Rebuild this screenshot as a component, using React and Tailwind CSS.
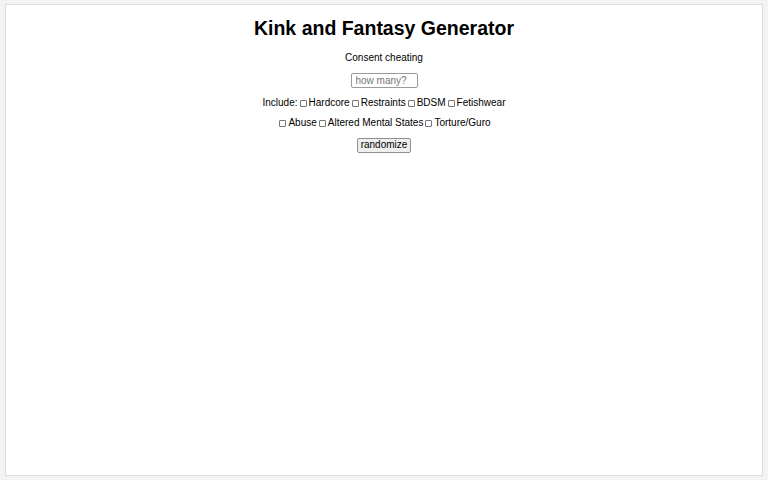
const kinds = ["Hardcore", "Restraints", "BDSM", "Fetishwear"];
const kinds2 = ["Abuse", "Altered Mental States", "Torture/Guro"];

function Option({ label }) {
  return (
    <label className="inline-flex items-center">
      <input
        type="checkbox"
        className="appearance-none w-[7px] h-[7px] border border-[#767676] rounded-[1px] bg-white mx-[2px] mt-[1px]"
      />
      {label}
    </label>
  );
}

export default function App() {
  return (
    <div className="h-[480px] bg-[#f3f3f3] p-[4px] pl-[5px] pr-[5px] font-['Liberation_Sans',Arial,sans-serif] text-black">
      <div className="h-[472px] bg-white border border-[#dcdcdc] flex flex-col items-center">
        <h1 className="text-[19.5px] font-bold leading-none mt-[14px]">
          Kink and Fantasy Generator
        </h1>
        <p className="text-[10px] mt-[14px] leading-none">Consent cheating</p>
        <input
          placeholder="how many?"
          className="mt-[10px] w-[67px] h-[15px] border border-[#9a9a9a] rounded-[2px] text-[10px] px-[4px] placeholder:text-[#777] outline-none"
        />
        <div className="mt-[10px] text-[10px] flex items-center leading-none">
          <span>Include:</span>
          {kinds.map((k) => (
            <Option key={k} label={k} />
          ))}
        </div>
        <div className="mt-[10px] text-[10px] flex items-center leading-none">
          {kinds2.map((k) => (
            <Option key={k} label={k} />
          ))}
        </div>
        <button className="mt-[10px] text-[10px] leading-none px-[3px] h-[15px] bg-[#efefef] border border-[#8f8f8f] rounded-[2px]">
          randomize
        </button>
      </div>
    </div>
  );
}
